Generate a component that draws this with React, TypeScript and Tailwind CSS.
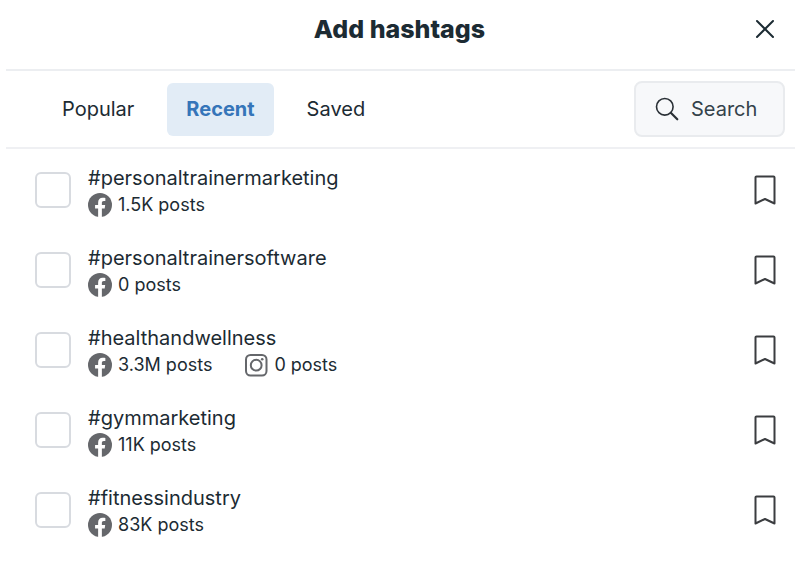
import { useState } from "react";

type Hashtag = {
  name: string;
  facebook: string;
  instagram?: string;
};

const tabs = ["Popular", "Recent", "Saved"];

const hashtags: Hashtag[] = [
  { name: "#personaltrainermarketing", facebook: "1.5K posts" },
  { name: "#personaltrainersoftware", facebook: "0 posts" },
  { name: "#healthandwellness", facebook: "3.3M posts", instagram: "0 posts" },
  { name: "#gymmarketing", facebook: "11K posts" },
  { name: "#fitnessindustry", facebook: "83K posts" },
];

function CloseIcon() {
  return (
    <svg width="20" height="20" viewBox="0 0 20 20" fill="none" stroke="#1c2b33" strokeWidth="2" strokeLinecap="round" aria-hidden="true">
      <path d="M2 2l16 16M18 2L2 18" />
    </svg>
  );
}

function SearchIcon() {
  return (
    <svg width="24" height="24" viewBox="0 0 24 24" fill="none" stroke="#2a3036" strokeLinecap="round" aria-hidden="true">
      <circle cx="9.8" cy="9.8" r="8.3" strokeWidth="1.6" />
      <path d="M16 16l6.3 6.3" strokeWidth="2.2" />
    </svg>
  );
}

function FacebookIcon() {
  return (
    <svg width="24" height="24" viewBox="0 0 24 24" aria-hidden="true">
      <circle cx="12" cy="12" r="12" fill="#65676b" />
      <path
        fill="#ffffff"
        d="M10.130 24v-8.440H7.080v-3.490h3.050V9.410c0-3.020 1.790-4.690 4.530-4.690 1.310 0 2.690.24 2.690.24v2.970h-1.520c-1.490 0-1.960.93-1.960 1.890v2.250h3.330l-.53 3.490h-2.800V24z"
      />
    </svg>
  );
}

function InstagramIcon() {
  return (
    <svg width="24" height="24" viewBox="0 0 24 24" fill="none" stroke="#65676b" strokeWidth="2" aria-hidden="true">
      <rect x="2" y="2" width="20.5" height="20.5" rx="4.5" />
      <circle cx="12.2" cy="12.2" r="5.4" />
      <circle cx="18.2" cy="6.2" r="1.3" fill="#65676b" stroke="none" />
    </svg>
  );
}

function BookmarkIcon() {
  return (
    <svg width="22" height="30" viewBox="0 0 22 30" fill="none" stroke="#3b3d40" strokeWidth="2" strokeLinejoin="round" aria-hidden="true">
      <path d="M2.5 1.5h17a1 1 0 0 1 1 1v26L11 24l-9.500 4.500v-26a1 1 0 0 1 1-1z" />
    </svg>
  );
}

function HashtagRow({ tag }: { tag: Hashtag }) {
  const id = tag.name.slice(1);
  return (
    <li className="flex h-20 items-center pl-[35px] pr-2.5">
      <input
        id={id}
        type="checkbox"
        className="size-9 shrink-0 appearance-none rounded-md border-2 border-[#d8dbe0] bg-white checked:border-[#2f72b9] checked:bg-[#2f72b9]"
      />
      <div className="ml-[17px] flex-1 pt-0.5">
        <label htmlFor={id} className="block text-xl leading-7">
          {tag.name}
        </label>
        <div className="flex h-[26px] items-center text-lg leading-6">
          <span className="flex items-center gap-1.5">
            <FacebookIcon />
            {tag.facebook}
          </span>
          {tag.instagram && (
            <span className="ml-8 flex items-center gap-1.5">
              <InstagramIcon />
              {tag.instagram}
            </span>
          )}
        </div>
      </div>
      <button type="button" aria-label={`Save ${tag.name}`} className="flex w-10 justify-center">
        <BookmarkIcon />
      </button>
    </li>
  );
}

export default function App() {
  const [active, setActive] = useState("Recent");

  return (
    <main className="min-h-screen bg-white font-['Inter',sans-serif] text-[#1c2b33]">
      <header className="ml-1.5 grid h-[71px] grid-cols-[40px_1fr_40px] items-center border-b-2 border-[#eceef1] pb-3 pl-2 pr-2.5">
        <h1 className="col-start-2 text-center text-[25px] font-extrabold leading-8">
          Add hashtags
        </h1>
        <button type="button" aria-label="Close" className="flex h-10 items-center justify-center">
          <CloseIcon />
        </button>
      </header>

      <div className="ml-1.5 flex h-[78px] items-center justify-between border-b-2 border-[#eff0f3] pl-[37px] pr-2.5">
        <nav className="flex gap-3.5">
          {tabs.map((tab) => (
            <button
              key={tab}
              type="button"
              onClick={() => setActive(tab)}
              className={
                tab === active
                  ? "h-[53px] rounded-md bg-[#e2ecf6] px-[19px] text-xl font-bold text-[#3575b9]"
                  : "h-[53px] rounded-md px-[19px] text-xl"
              }
            >
              {tab}
            </button>
          ))}
        </nav>
        <label className="flex h-14 w-[151px] items-center gap-3 rounded-lg border-2 border-[#e9ebee] bg-[#f7f8fa] pl-[19px]">
          <SearchIcon />
          <input
            type="text"
            aria-label="Search"
            placeholder="Search"
            className="w-20 bg-transparent text-xl outline-none placeholder:text-[#34424b]"
          />
        </label>
      </div>

      <ul className="pt-px">
        {hashtags.map((tag) => (
          <HashtagRow key={tag.name} tag={tag} />
        ))}
      </ul>
    </main>
  );
}
